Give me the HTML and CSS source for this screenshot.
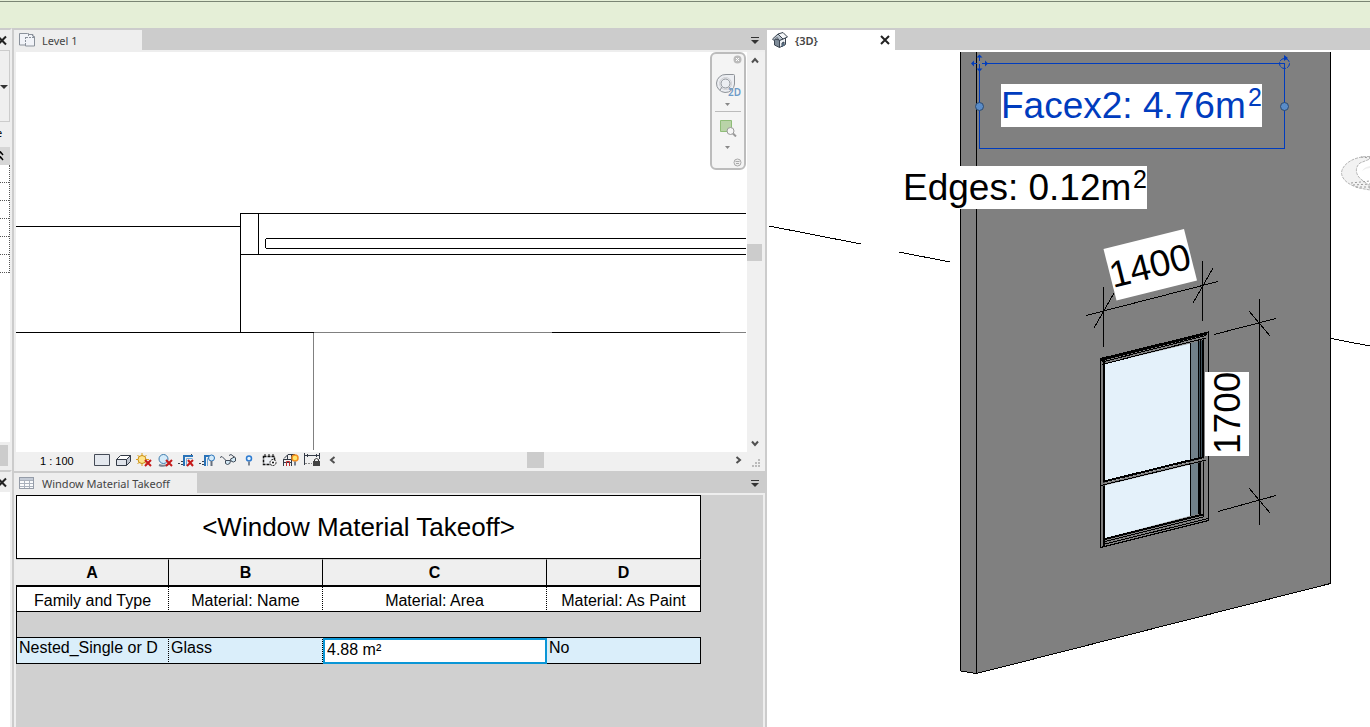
FILE: index.html
```html
<!DOCTYPE html>
<html lang="en">
<head>
  <meta charset="UTF-8">
  <title>Window Material Takeoff</title>
  <meta name="viewport" content="width=device-width, initial-scale=1.0">
  <link rel="stylesheet" href="styles.css">
</head>
<body>
  <div class="ribbon"></div>
  <div class="workspace">

    <!-- docked palettes, mostly off the left edge -->
    <aside class="side">
      <div class="palette palette-top">
        <button class="palette-close" aria-label="Close properties">
          <svg width="12" height="20" viewBox="0 0 12 20"><path d="M-2 6.500L6 14.500M6 6.500L-2 14.500" stroke="#222" stroke-width="2" /></svg>
        </button>
        <div class="type-box">
          <svg width="8" height="6" viewBox="0 0 8 6"><path d="M0 0h8l-4 4z" fill="#333" /></svg>
        </div>
        <div class="edit-type">e</div>
        <div class="group-head">
          <svg width="4" height="10" viewBox="0 0 4 10"><path d="M-2 4L0.500 1L3 4M-2 9L0.500 6L3 9" fill="none" stroke="#000" stroke-width="1.500" /></svg>
        </div>
        <ul class="props">
          <li></li><li></li><li></li><li></li><li></li><li></li>
        </ul>
        <div class="side-scroll"></div>
      </div>
      <div class="palette palette-bottom">
        <button class="palette-close" aria-label="Close browser">
          <svg width="12" height="20" viewBox="0 0 12 20"><path d="M-2 6.500L6 14.500M6 6.500L-2 14.500" stroke="#222" stroke-width="2" /></svg>
        </button>
      </div>
    </aside>

    <main class="center">
      <section class="view plan-view">
        <div class="tabs">
          <a class="tab tab-level" href="#plan">
            <svg width="16" height="14" viewBox="0 0 16 14" fill="#f1f3f8" stroke="#8a919b"><path d="M.5.500h8l1 0v1h4.500v2h1.500v9.500h-9v-1h-6z" /><path d="M6.500 4v8M7 4.500h8M9.500 1v3M13.500 1v3" stroke-dasharray="2 1" fill="none" /></svg>
            <span>Level 1</span>
          </a>
          <button class="tab-list" aria-label="Views">
            <svg width="8" height="7" viewBox="0 0 8 7"><path d="M0 0h8v1H0zM0 3h8L4 7z" fill="#333" /></svg>
          </button>
        </div>
        <div class="plan-body" id="plan">
          <div class="plan-canvas">
            <svg class="drawing" viewBox="16 52 731 400" preserveAspectRatio="xMinYMin slice" fill="none" stroke="#000" shape-rendering="crispEdges">
              <path d="M16 226.500H240M240.500 332V213.500H746M258.500 214V254M240 254.500H746M266 238.500H746M266 248.500H746M265.500 239V248" />
              <path d="M314 332.500H552M720 332.500H746M313.500 333V450" stroke="#808080" />
              <path d="M16 332.500H314M552 332.500H720" />
            </svg>
            <div class="navbar">
              <button class="nav-close" aria-label="Close navigation bar">
                <svg width="9" height="9" viewBox="0 0 9 9"><circle cx="4.500" cy="4.500" r="4" fill="#bbb" /><path d="M3 3l3 3M6 3l-3 3" stroke="#fff" /></svg>
              </button>
              <button class="nav-wheel" aria-label="Steering wheel 2D">
                <svg width="20" height="20" viewBox="0 0 20 20" fill="#eceef2" stroke="#8e9298"><path d="M10 .500h7.500q1 0 1 1V10A9 9 0 1 1 10 .500z" /><circle cx="9.500" cy="9.500" r="6" stroke="#d0d0d4" fill="none" /><circle cx="9.500" cy="9.500" r="4.500" /><path d="M4 16l2-3M15 16l-2-3" /></svg>
                <span>2D</span>
              </button>
              <button class="nav-more" aria-label="Wheel options"><svg width="5" height="3" viewBox="0 0 5 3"><path d="M0 0h5L2.500 3z" fill="#888" /></svg></button>
              <hr>
              <button class="nav-zoom" aria-label="Zoom region">
                <svg width="17" height="17" viewBox="0 0 17 17"><path d="M.5.500h11v11H.500z" fill="#b9d3a8" stroke="#8fbd78" /><path d="M12.500 13l3.500 3.500" stroke="#999" stroke-width="2" /><circle cx="10.500" cy="11" r="3.500" fill="#f5f5f5" stroke="#999" /></svg>
              </button>
              <button class="nav-more" aria-label="Zoom options"><svg width="5" height="3" viewBox="0 0 5 3"><path d="M0 0h5L2.500 3z" fill="#888" /></svg></button>
              <button class="nav-settings" aria-label="Navigation settings">
                <svg width="9" height="9" viewBox="0 0 9 9"><circle cx="4.500" cy="4.500" r="3.500" fill="#eee" stroke="#aaa" /><path d="M2.500 3.500h4M3 5.500h3" stroke="#aaa" /></svg>
              </button>
            </div>
          </div>
          <div class="vscroll">
            <button aria-label="Scroll up"><svg width="8" height="7" viewBox="0 0 8 7"><path d="M1 5.500L4 2l3 3.500" fill="none" stroke="#505050" stroke-width="2" /></svg></button>
            <div class="vthumb"></div>
            <button aria-label="Scroll down"><svg width="8" height="7" viewBox="0 0 8 7"><path d="M1 1.500L4 5l3-3.500" fill="none" stroke="#505050" stroke-width="2" /></svg></button>
          </div>
          <div class="view-controls">
            <button class="scale">1 : 100</button>
            <div class="icons">
              <button aria-label="Detail level"><svg viewBox="0 0 16 16"><path d="M.5 2.500h15v11H.500z" fill="#e4e8ee" stroke="#454b57" /></svg></button>
              <button aria-label="Visual style"><svg viewBox="0 0 16 16" fill="#fff" stroke="#333a46"><path d="M1.500 7.500l4-4h10l-4 4z" /><path d="M1.500 7.500h10v6h-10z" fill="#dfe3ea" /><path d="M11.500 7.500l4-4v6l-4 4z" fill="#bfc5cf" /></svg></button>
              <button aria-label="Sun path"><svg viewBox="0 0 16 16"><path d="M6 1v13M0 7.500h13M1.500 3l9 9M1.500 12l9-9" stroke="#dca11a" /><circle cx="6" cy="7.500" r="4" fill="#ffe58c" stroke="#c98d10" /><path d="M9 8l6 6M15 8l-6 6" stroke="#c51a1a" stroke-width="2" /></svg></button>
              <button aria-label="Shadows"><svg viewBox="0 0 16 16"><path d="M2 13q5 2 10-1" stroke="#7b8594" stroke-width="2" fill="none" /><circle cx="6.500" cy="7" r="4.500" fill="#d4ebfa" stroke="#3e7cae" /><path d="M9 8l6 6M15 8l-6 6" stroke="#c51a1a" stroke-width="2" /></svg></button>
              <button aria-label="Crop view"><svg viewBox="0 0 16 16" fill="none"><path d="M0 11.500h2M3 9.500h2M3 12.500h2M13.500 5V2" stroke="#3b424e" /><path d="M6 14V4h9" stroke="#2872b8" stroke-width="2" /><path d="M8.500 14V6.500h6" stroke="#71a9d8" /><path d="M10 8l5 6M15 8l-6 6" stroke="#c51a1a" stroke-width="2" /></svg></button>
              <button aria-label="Show crop region"><svg viewBox="0 0 16 16" fill="none"><path d="M0 11.500h2M3 9.500h2M3 12.500h2" stroke="#3b424e" /><path d="M6 14V4h5" stroke="#2872b8" stroke-width="2" /><path d="M8.500 14V6.500h2" stroke="#71a9d8" /><circle cx="12.500" cy="6" r="3" fill="#d4ebfa" stroke="#2872b8" /><path d="M12.500 9v5" stroke="#66707e" stroke-width="2" /></svg></button>
              <button aria-label="Temporary hide or isolate"><svg viewBox="0 0 16 16" fill="#d3e9f5" stroke="#414b58"><path d="M0 5.500l2-1 4 4h4M9 3.500l2-1 4 3" fill="none" /><path d="M5.500 8.500q-1 4 2 4t3-4zM10.500 7q0 3 3 3t2-4l-1-1z" /></svg></button>
              <button aria-label="Reveal hidden elements"><svg viewBox="0 0 16 16"><circle cx="8" cy="6.500" r="2.500" fill="#e3f3ff" stroke="#2d7bd0" stroke-width="1.500" /><path d="M8 9.500v4" stroke="#7c8795" stroke-width="2" /></svg></button>
              <button aria-label="Temporary view properties"><svg viewBox="0 0 16 16"><path d="M1.500 4.500h11v8h-11z" fill="#eef1f5" stroke="#111" stroke-width="1.500" stroke-dasharray="3 1" /><path d="M2 3h2M6 3h2M10 3h2" stroke="#111" /><circle cx="11" cy="10.500" r="3" fill="#fff" stroke="#111" stroke-dasharray="2 1" /><circle cx="11" cy="10.500" r="1" /></svg></button>
              <button aria-label="Analytical model"><svg viewBox="0 0 16 16"><path d="M1 6.500l4-4h7M.5 7v7M0 7.500h9M4.500 3v4M8.500 3v11M0 10.500h8" stroke="#333a46" fill="none" /><path d="M3.500 14V9.500h3V14" stroke="#c22727" fill="none" /><circle cx="12" cy="6" r="3" fill="#ffe66b" stroke="#f28c1e" stroke-width="1.500" /><path d="M12 9.500v4" stroke="#77808d" stroke-width="2" /></svg></button>
              <button aria-label="Reveal constraints"><svg viewBox="0 0 16 16"><path d="M.5 1v12M15.500 1v6M1 3.500h14M3.500 2v3M12.500 2v3" stroke="#333a46" fill="none" /><path d="M1 11.500h7" stroke="#888" stroke-dasharray="2 1" /><path d="M10.500 9V7.500q2-2 4 0V9" stroke="#333" fill="none" /><path d="M9 9h7v5H9z" fill="#444" /></svg></button>
            </div>
            <div class="hscroll">
              <button aria-label="Scroll left"><svg width="7" height="8" viewBox="0 0 7 8"><path d="M5.500 1L2 4l3.500 3" fill="none" stroke="#505050" stroke-width="2" /></svg></button>
              <div class="hthumb"></div>
              <button aria-label="Scroll right"><svg width="7" height="8" viewBox="0 0 7 8"><path d="M1.500 1L5 4L1.500 7" fill="none" stroke="#505050" stroke-width="2" /></svg></button>
            </div>
          </div>
          <div class="grip">
            <svg width="8" height="8" viewBox="0 0 8 8"><path d="M6 0h2v2H6zM3 3h2v2H3zM6 3h2v2H6zM0 6h2v2H0zM3 6h2v2H3zM6 6h2v2H6z" fill="#bbb" /></svg>
          </div>
        </div>
      </section>

      <section class="view schedule-view">
        <div class="tabs">
          <a class="tab tab-schedule" href="#schedule">
            <svg width="16" height="12" viewBox="0 0 16 12" shape-rendering="crispEdges"><path d="M.5.500h14v11H.500z" fill="#fafbfc" stroke="#959ca8" /><path d="M1 1h13v2H1z" fill="#c4cbd6" /><path d="M1 3.500h13M1 6.500h13M1 9.500h13M5.500 3v8M10.500 3v8" stroke="#aab1bc" /></svg>
            <span>Window Material Takeoff</span>
          </a>
          <button class="tab-list" aria-label="Views">
            <svg width="8" height="7" viewBox="0 0 8 7"><path d="M0 0h8v1H0zM0 3h8L4 7z" fill="#333" /></svg>
          </button>
        </div>
        <div class="schedule-body" id="schedule">
          <table class="schedule">
            <colgroup><col class="col-a"><col class="col-b"><col class="col-c"><col class="col-d"></colgroup>
            <tr class="title"><th colspan="4">&lt;Window Material Takeoff&gt;</th></tr>
            <tr class="letters"><th>A</th><th>B</th><th>C</th><th>D</th></tr>
            <tr class="fields"><td>Family and Type</td><td>Material: Name</td><td>Material: Area</td><td>Material: As Paint</td></tr>
            <tr class="blank"><td colspan="4"></td></tr>
            <tr class="data">
              <td>Nested_Single or D</td>
              <td>Glass</td>
              <td class="editing"><input type="text" value="4.88 m²" aria-label="Material: Area"></td>
              <td>No</td>
            </tr>
          </table>
        </div>
      </section>
    </main>

    <section class="view model-view">
      <div class="tabs">
        <div class="tab tab-3d">
          <svg width="16" height="16" viewBox="0 0 16 16" stroke="#3a4450"><path d="M2.500 7v6l5 2.500V8z" fill="#7e8b98" /><path d="M7.500 8v7.500l6-3V6z" fill="#eef2f6" /><path d="M.5 7L6 2l5 5-3.500 1.500L5 5.500l-3 3z" fill="#b9c3cd" /><path d="M6 2l5-1.500L15.500 5 11 7z" fill="#f4f6f8" /><path d="M10 15v-4l2-1v4" fill="#6a8fae" /></svg>
          <a href="#model">{3D}</a>
          <button aria-label="Close {3D}"><svg width="10" height="10" viewBox="0 0 10 10"><path d="M1 1l8 8M9 1L1 9" stroke="#222" stroke-width="2" /></svg></button>
        </div>
      </div>
      <div class="model-canvas" id="model">
        <svg class="drawing" viewBox="767 50 603 677" preserveAspectRatio="xMinYMin slice">
          <!-- level line behind the wall -->
          <path class="line" d="M769 226L861 244M899 252L950 262M1331 338.500L1370 346" />

          <!-- wall -->
          <path class="line wall" d="M960.500 51.500H1330.500V583.500L976.500 673.500L960.500 671z" />
          <path class="line" d="M976.500 52V674" />
          <path d="M960 50h372v2H960z" fill="#fff" />

          <!-- window -->
          <path d="M1104 364L1190 343.500V516L1104 538.500z" fill="#e4f1fa" />
          <path d="M1190 343.500L1198 341.500V514L1190 516z" fill="#71818a" />
          <path d="M1198 341.500L1204 340V457L1198 458.500z" fill="#40525c" />
          <g class="line">
            <path d="M1100.500 358.500L1208.500 332V520.500L1100.500 547.500z" />
            <path d="M1190.500 343V516M1198.500 340V514M1200.500 340V458M1203.500 339V457" />
            <path d="M1103 542L1203 517V458M1103 544.500L1208 518.500" />
          </g>
          <path class="line heavy" d="M1103.500 360V547M1101 360L1207 333.500M1199.500 462V514M1202.500 340V457M1103 539.500L1203 514.500" />
          <path class="line" d="M1102 362L1206 335.500M1102 364.500L1206 338" />
          <path d="M1102 483L1205 458V461L1102 486z" fill="#808080" />
          <path class="line heavy" d="M1104 481.500L1204 457" />
          <path class="line" d="M1101 485.500L1206 460" />

          <!-- dimension 1400 -->
          <path class="line" d="M1086 315.500L1218 281.500M1103.500 287V347M1202.500 261V321M1094 328L1114 293M1193 303L1213 268" />
          <path d="M1103.500 249L1184 229L1197 280.500L1116.500 300.500z" fill="#fff" />
          <text class="note" transform="translate(1113 288) rotate(-14)">1400</text>

          <!-- dimension 1700 -->
          <path class="line" d="M1259.500 299V525M1214 334.500L1276 318.500M1249 311L1270 336M1218 511.500L1276 495.500M1249 488L1270 513" />
          <path d="M1205 372h44v84h-44z" fill="#fff" />
          <text class="note" transform="translate(1240 454) rotate(-90)">1700</text>

          <!-- text notes -->
          <path d="M902 166h245v43H902z" fill="#fff" />
          <text class="note" x="903" y="200">Edges: 0.12m</text>
          <text class="note sup" x="1133" y="188">2</text>
          <path d="M1001 84h261v43h-261z" fill="#fff" />
          <text class="note selected" x="1001" y="118">Facex2: 4.76m</text>
          <text class="note sup selected" x="1248" y="106">2</text>

          <!-- selection box and grips -->
          <g fill="none" stroke="#003cbe" shape-rendering="crispEdges">
            <path d="M986 63.500H1279M1284.500 64V148.500H979.500V64M972 63.500H977M979.500 56V61M982 63.500H987M979.500 66V71" />
            <path d="M1284.500 63.500V70M1279 63.500h6" />
          </g>
          <path d="M971 63.500l3-3v6zM988 63.500l-3-3v6zM979.500 54.500l-3 3h6zM979.500 71.500l-3-3h6zM1284 55l4 3-4 3z" fill="#003cbe" />
          <circle cx="1284.500" cy="63.500" r="5" fill="none" stroke="#003cbe" stroke-dasharray="5 1" />
          <circle class="grip-dot" cx="979.500" cy="106.500" r="4" />
          <circle class="grip-dot" cx="1284.500" cy="106.500" r="4" />

          <!-- compass ring of the view cube -->
          <path d="M1370 156.500C1354 156 1342 164 1341.500 173C1342 180 1349 185 1359 188L1370 190V186L1362 180C1356 176 1354 168 1360 163L1370 159z" fill="#f2f2f2" stroke="#b5b5b5" stroke-dasharray="3 1" />
          <path d="M1351 183L1370 181M1353 185L1370 184M1356 187L1370 187M1361 157L1370 158" stroke="#999" stroke-dasharray="2 2" />
          <path d="M1370 166q-6 1-8 5q4-3 8-3z" fill="#eee" />
        </svg>
      </div>
    </section>
  </div>
</body>
</html>
```
FILE: styles.css
```css
* {
  box-sizing: border-box;
}

body {
  margin: 0;
  height: 100vh;
  display: flex;
  flex-direction: column;
  overflow: hidden;
  background: #fff;
  color: #000;
  font-family: "Noto Sans", "Open Sans", sans-serif;
  font-size: 11px;
}

button {
  margin: 0;
  padding: 0;
  border: none;
  background: none;
  color: inherit;
  font: inherit;
  display: flex;
  align-items: center;
  justify-content: center;
}

a {
  color: inherit;
  text-decoration: none;
}

svg {
  display: block;
  flex: none;
}

.ribbon {
  height: 28px;
  flex: none;
  background: linear-gradient(#e5efd7 1px, #7a8574 1px, #7a8574 2px, #e5efd7 2px);
}

.workspace {
  flex: 1;
  min-height: 0;
  display: grid;
  grid-template-columns: 14px minmax(0, 753fr) minmax(0, 603fr);
}

/* left palettes */
.side {
  display: flex;
  flex-direction: column;
  min-height: 0;
  background: #fff;
  border-right: 2px solid #ccc;
}

.palette {
  display: flex;
  flex-direction: column;
  min-height: 0;
  border-top: 2px solid #ccc;
  border-right: 2px solid #eee;
}

.palette-top {
  flex: 443;
}

.palette-bottom {
  flex: 256;
}

.palette-close {
  height: 20px;
  width: 12px;
  flex: none;
  background: #eee;
}

.type-box {
  height: 72px;
  padding-top: 34px;
  background: #efefef;
  border: 1px solid #ccc;
  border-left: none;
}

.edit-type {
  height: 25px;
  line-height: 22px;
  background: #eee;
  text-indent: -4px;
}

.group-head {
  height: 18px;
  padding-top: 4px;
  background: #d6d6d6;
}

.props {
  margin: 0;
  padding: 0;
  list-style: none;
  border-right: 1px dotted #555;
}

.props li {
  height: 18px;
  border-bottom: 1px dotted #555;
}

.side-scroll {
  height: 28px;
  margin-top: auto;
  border: solid #eee;
  border-width: 3px 2px 4px 0;
  background: #ccc;
}

/* views */
.center {
  display: flex;
  flex-direction: column;
  min-height: 0;
  border-right: 2px solid #ccc;
}

.view {
  display: flex;
  flex-direction: column;
  min-width: 0;
  min-height: 0;
}

.plan-view {
  flex: 443;
}

.schedule-view {
  flex: 256;
}

.tabs {
  height: 22px;
  flex: none;
  display: flex;
  justify-content: space-between;
  padding-top: 2px;
  background: #ccc;
}

.tab {
  display: flex;
  align-items: center;
  gap: 7px;
  padding-left: 5px;
  background: #eee;
  color: #444;
}

.tab-level {
  width: 128px;
}

.tab-schedule {
  width: 183px;
}

.tab-3d {
  width: 128px;
  padding-right: 5px;
  background: #fff;
  font-weight: 600;
}

.tab-3d button {
  margin-left: auto;
}

.tab-list {
  width: 20px;
}

.plan-body {
  flex: 1;
  min-height: 0;
  display: grid;
  grid-template-columns: minmax(0, 1fr) 18px;
  grid-template-rows: minmax(0, 1fr) 19px;
  padding: 2px 0 0 2px;
  background: #eee;
}

.plan-canvas {
  position: relative;
  background: #fff;
}

.drawing {
  width: 100%;
  height: 100%;
}

.navbar {
  position: absolute;
  top: 0;
  right: 1px;
  width: 36px;
  height: 118px;
  display: flex;
  flex-direction: column;
  align-items: center;
  background: #f4f4f4;
  border: 2px solid #bcbcbc;
  border-radius: 6px;
}

.navbar hr {
  width: 26px;
  margin: 5px 0 8px;
  border: none;
  border-top: 1px solid #bbb;
}

.nav-close,
.nav-settings {
  align-self: flex-end;
  margin: 1px 2px 0 0;
}

.nav-settings {
  margin-top: auto;
  margin-bottom: 1px;
}

.nav-wheel {
  position: relative;
  margin: 10px 4px 9px 0;
}

.nav-wheel span {
  position: absolute;
  left: 12px;
  top: 11px;
  color: #6d9bc8;
  font-size: 10px;
  font-weight: 600;
  line-height: 14px;
}

.nav-zoom {
  margin-bottom: 9px;
}

.nav-more {
  margin-right: 2px;
}

.vscroll {
  display: flex;
  flex-direction: column;
  justify-content: space-between;
  padding-right: 3px;
  background: #f0f0f0;
}

.vscroll button {
  height: 17px;
}

.vthumb {
  height: 17px;
  background: #ccc;
}

.view-controls {
  display: flex;
  align-items: flex-start;
  padding-left: 24px;
  background: #f0f0f0;
}

.scale {
  width: 54px;
  height: 18px;
  justify-content: flex-start;
  font-family: "Liberation Sans", sans-serif;
}

.icons {
  display: flex;
  gap: 5px;
}

.icons button,
.icons svg {
  width: 16px;
  height: 16px;
}

.hscroll {
  flex: 1;
  display: flex;
  padding: 0 1px 0 4px;
}

.hscroll button {
  width: 16px;
}

.hthumb {
  width: 17px;
  height: 16px;
  margin: 0 auto;
  background: #ccc;
}

.grip {
  padding: 7px 0 0 5px;
  background: #f0f0f0;
}

.schedule-body {
  flex: 1;
  min-height: 0;
  border: 2px solid #eee;
  border-bottom: none;
  background: #d0d0d0;
}

/* schedule grid */
.schedule {
  width: 685px;
  max-width: 100%;
  table-layout: fixed;
  border-collapse: separate;
  border-spacing: 0;
  font-family: "Liberation Sans", Arial, sans-serif;
  font-size: 16px;
  line-height: 20px;
}

.schedule th,
.schedule td {
  padding: 0;
  white-space: nowrap;
  overflow: hidden;
}

.col-a {
  width: 153px;
}

.col-b,
.col-d {
  width: 154px;
}

.col-c {
  width: 224px;
}

.title th {
  height: 64px;
  border: 1px solid #000;
  background: #fff;
  font-size: 26px;
  font-weight: normal;
}

.letters th {
  height: 28px;
  border-top: 1px solid #d0d0d0;
  border-right: 1px solid #000;
  border-bottom: 2px solid #000;
  background: #efefef;
}

.fields td {
  height: 25px;
  padding-top: 4px;
  border-right: 1px dotted #000;
  border-bottom: 1px solid #000;
  background: #fff;
  text-align: center;
}

.blank td {
  height: 25px;
}

.data td {
  height: 27px;
  padding-left: 2px;
  border: solid #000;
  border-width: 1px 0;
  border-right: 1px dotted #000;
  background: #daeefa;
  vertical-align: top;
}

.fields td:first-child,
.blank td,
.data td:first-child {
  border-left: 1px solid #000;
}

.fields td:last-child,
.data td:last-child {
  border-right: 1px solid #000;
}

.schedule .editing {
  padding: 0;
  border-right: none;
  border-bottom: none;
}

.editing input {
  display: block;
  width: 100%;
  height: 26px;
  padding: 0 2px 2px;
  border: 2px solid #0a96d6;
  border-radius: 0;
  background: #fff;
  color: #000;
  font: inherit;
}

/* 3D view */
.model-canvas {
  flex: 1;
  min-height: 0;
  background: #fff;
}

.line {
  fill: none;
  stroke: #000;
  shape-rendering: crispEdges;
}

.wall {
  fill: #808080;
}

.heavy {
  stroke-width: 2px;
}

.note {
  font-family: "Liberation Sans", Arial, sans-serif;
  font-size: 37px;
}

.sup {
  font-size: 25px;
}

.selected {
  fill: #003cbe;
}

.grip-dot {
  fill: #5a8cc8;
  stroke: #2c4a70;
}
```
